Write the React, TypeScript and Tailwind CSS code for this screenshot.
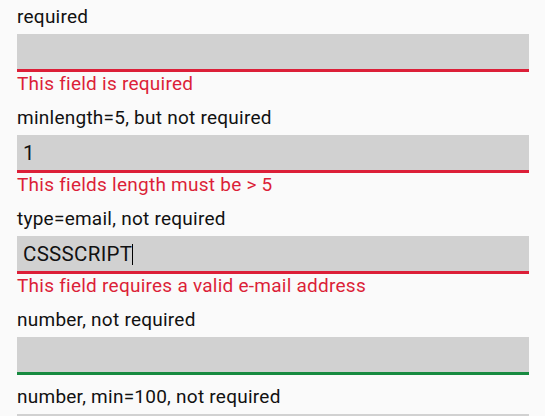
import React from "react";

type Field = {
  label: string;
  value?: string;
  caret?: boolean;
  status: "error" | "ok" | "none";
  error?: string;
};

const fields: Field[] = [
  { label: "required", status: "error", error: "This field is required" },
  { label: "minlength=5, but not required", value: "1", status: "error", error: "This fields length must be > 5" },
  { label: "type=email, not required", value: "CSSSCRIPT", caret: true, status: "error", error: "This field requires a valid e-mail address" },
  { label: "number, not required", status: "ok" },
  { label: "number, min=100, not required", status: "none" },
];

export default function App() {
  return (
    <div
      className="min-h-screen bg-[#fafafa] px-[17px] pt-[5px] text-[19px] tracking-[0.25px] text-[#111]"
      style={{ fontFamily: "Roboto, 'Liberation Sans', sans-serif" }}
    >
      <form className="flex w-[512px] flex-col gap-[10px]">
        {fields.map((f) => (
          <div key={f.label} className="flex flex-col">
            {/* label */}
            <label className="mb-[5px] leading-[24px]">{f.label}</label>

            {/* field */}
            <div
              className={
                "flex h-[38px] items-center border-b-[3px] bg-[#d1d1d1] px-[6px] pt-px text-[20.5px] leading-none tracking-[0.3px] " +
                (f.status === "error"
                  ? "border-[#dc1f38]"
                  : f.status === "ok"
                  ? "border-[#178a40]"
                  : "border-[#d1d1d1]")
              }
            >
              <span>{f.value}</span>
              {f.caret && <span className="inline-block h-[21px] w-px bg-black" />}
            </div>

            {/* error message */}
            {f.error && (
              <div className="leading-[24px] text-[#dc1f38]">{f.error}</div>
            )}
          </div>
        ))}
      </form>
    </div>
  );
}
